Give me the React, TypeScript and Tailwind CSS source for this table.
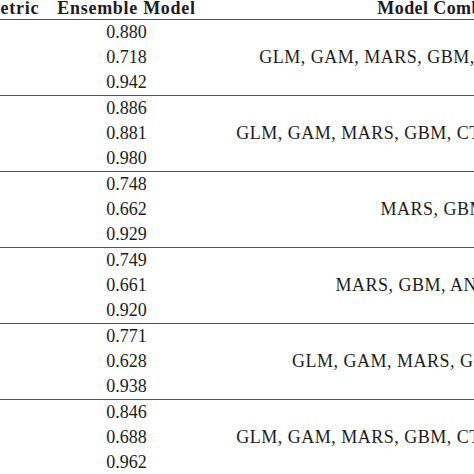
import React from 'react';

interface Group {
  values: [string, string, string];
  models: string;
}

const groups: Group[] = [
  { values: ['0.880', '0.718', '0.942'], models: 'GLM, GAM, MARS, GBM, ANN, FDA, MAXENT' },
  { values: ['0.886', '0.881', '0.980'], models: 'GLM, GAM, MARS, GBM, CTA, ANN, FDA, MAXENT' },
  { values: ['0.748', '0.662', '0.929'], models: 'MARS, GBM, ANN' },
  { values: ['0.749', '0.661', '0.920'], models: 'MARS, GBM, ANN, MAXENT' },
  { values: ['0.771', '0.628', '0.938'], models: 'GLM, GAM, MARS, GBM, RF, MAXENT' },
  { values: ['0.846', '0.688', '0.962'], models: 'GLM, GAM, MARS, GBM, CTA, ANN, FDA, MAXENT' },
];

export default function App() {
  return (
    <div
      className="w-[474px] h-[474px] overflow-hidden bg-white text-[#1c1c1c]"
      style={{ fontFamily: '"Liberation Serif", "Times New Roman", serif' }}
    >
      <div className="ml-[-28px] w-[766px] text-[18px]">
        {/* Header */}
        <div className="flex h-[19px] items-end pb-[2px] font-bold leading-none">
          <div className="w-[78px] text-center whitespace-nowrap tracking-[0.7px]">Metric</div>
          <div className="w-[153px] text-center whitespace-nowrap tracking-[0.7px]">Ensemble Model</div>
          <div className="w-[510px] text-center whitespace-nowrap tracking-[0.4px]">Model Combination</div>
        </div>

        {/* Body */}
        {groups.map((g, i) => (
          <div key={i} className="flex border-t border-[#555]">
            <div className="w-[78px]"></div>
            <div className="w-[153px] flex flex-col">
              {g.values.map((v, j) => (
                <div key={j} className="h-[25px] leading-[25px] text-center">
                  {v}
                </div>
              ))}
            </div>
            <div className="w-[510px] flex items-center justify-center whitespace-nowrap tracking-[0.5px]">
              {g.models}
            </div>
          </div>
        ))}
      </div>
    </div>
  );
}
